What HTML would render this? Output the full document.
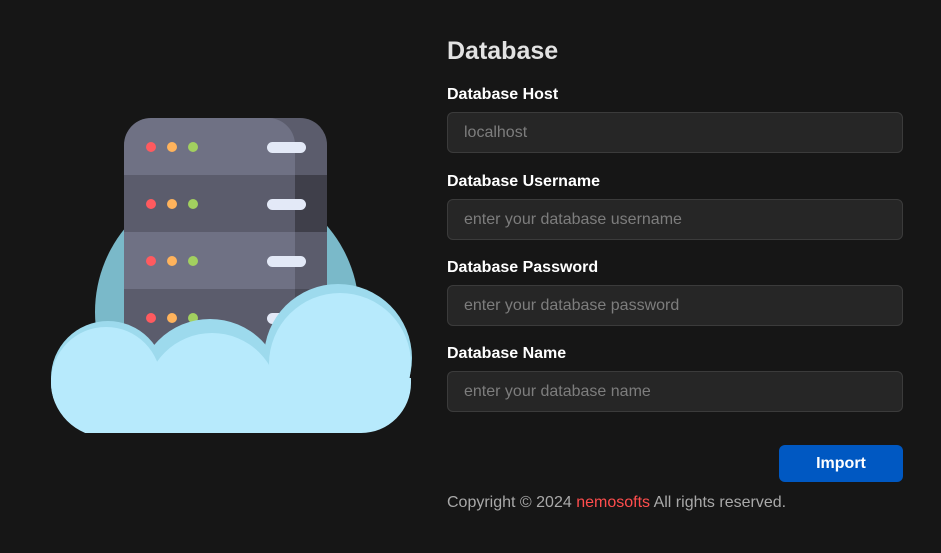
<!DOCTYPE html>
<html><head><style>
html,body{margin:0;padding:0;background:#161616;width:941px;height:553px;overflow:hidden;font-family:"Liberation Sans",sans-serif}
.abs{position:absolute}
h1{position:absolute;left:447px;top:37px;margin:0;font-size:25px;font-weight:bold;color:#e2e2e2}
.lbl{position:absolute;left:447px;font-size:16px;font-weight:bold;color:#fff}
.inp{position:absolute;left:447px;height:39px;background:#262626;border:1px solid #3b3b3b;border-radius:6px;color:#7d7d7d;font-size:16px;line-height:39px;box-sizing:content-box;padding-left:16px;width:438px}
.btn{position:absolute;left:779px;top:445px;width:124px;height:37px;background:#0058c2;border-radius:6px;color:#fff;font-weight:bold;font-size:16px;text-align:center;line-height:37px}
.copy{position:absolute;left:447px;top:494px;font-size:16px;color:#a9a9a9}
.copy span{color:#ff4d4d}
</style></head><body>
<svg class="abs" style="left:0;top:0" width="440" height="553">
<defs><clipPath id="c"><rect x="0" y="0" width="440" height="433"/></clipPath>
<clipPath id="t"><rect x="0" y="0" width="440" height="400"/></clipPath></defs>
<circle cx="227" cy="312" r="132" fill="#7ab9c9" clip-path="url(#t)"/>
<path d="M124 145 a27 27 0 0 1 27 -27 h149 a27 27 0 0 1 27 27 v200 h-203z" fill="#6f7184"/>
<rect x="124" y="175" width="203" height="57" fill="#5b5c6c"/>
<rect x="124" y="289" width="203" height="60" fill="#5b5c6c"/>
<path d="M270 118 h30 a27 27 0 0 1 27 27 v200 h-32 v-200 a27 27 0 0 0 -25 -27z" fill="#000" opacity="0.18"/>
<rect x="295" y="175" width="32" height="57" fill="#000" opacity="0.15"/>
<g>
<circle cx="151" cy="147" r="5" fill="#ff5a5f"/><circle cx="172" cy="147" r="5" fill="#ffb35c"/><circle cx="193" cy="147" r="5" fill="#a2d05f"/><rect x="267" y="142" width="39" height="11" rx="5.5" fill="#e3e9f7"/>
<circle cx="151" cy="204" r="5" fill="#ff5a5f"/><circle cx="172" cy="204" r="5" fill="#ffb35c"/><circle cx="193" cy="204" r="5" fill="#a2d05f"/><rect x="267" y="199" width="39" height="11" rx="5.5" fill="#e3e9f7"/>
<circle cx="151" cy="261" r="5" fill="#ff5a5f"/><circle cx="172" cy="261" r="5" fill="#ffb35c"/><circle cx="193" cy="261" r="5" fill="#a2d05f"/><rect x="267" y="256" width="39" height="11" rx="5.5" fill="#e3e9f7"/>
<circle cx="151" cy="318" r="5" fill="#ff5a5f"/><circle cx="172" cy="318" r="5" fill="#ffb35c"/><circle cx="193" cy="318" r="5" fill="#a2d05f"/><rect x="267" y="313" width="39" height="11" rx="5.5" fill="#e3e9f7"/>
</g>
<g clip-path="url(#c)">
<g fill="#9ddaed">
<circle cx="108" cy="378" r="57"/><circle cx="210" cy="392" r="73"/><circle cx="338" cy="358" r="74"/>
</g>
<g fill="#b7eafc">
<circle cx="106" cy="382" r="55"/><circle cx="212" cy="400" r="67"/><circle cx="340" cy="364" r="71"/>
<path d="M51 378 H411 V383 a50 50 0 0 1 -50 50 H101 a50 50 0 0 1 -50 -50z"/>
</g>
</g>
</svg>
<h1>Database</h1>
<div class="lbl" style="top:86px">Database Host</div>
<div class="inp" style="top:112px">localhost</div>
<div class="lbl" style="top:173px">Database Username</div>
<div class="inp" style="top:199px">enter your database username</div>
<div class="lbl" style="top:259px">Database Password</div>
<div class="inp" style="top:285px">enter your database password</div>
<div class="lbl" style="top:345px">Database Name</div>
<div class="inp" style="top:371px">enter your database name</div>
<div class="btn">Import</div>
<div class="copy">Copyright © 2024 <span>nemosofts</span> All rights reserved.</div>
</body></html>
